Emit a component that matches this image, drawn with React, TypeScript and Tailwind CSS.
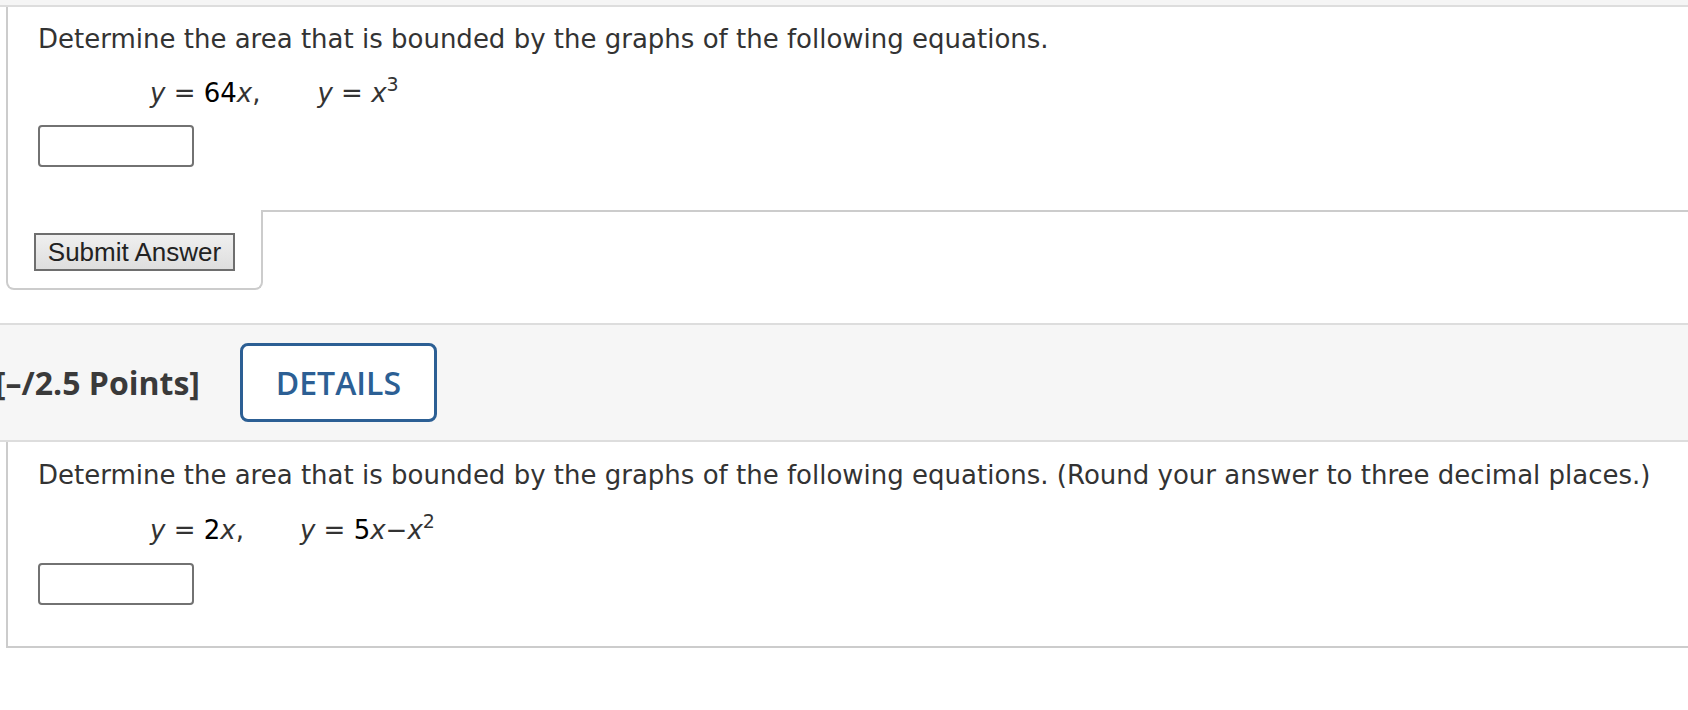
import React from 'react';

const questionFont = "font-['DejaVu_Sans',Verdana,sans-serif]";

const Sup: React.FC<{ children: React.ReactNode }> = ({ children }) => (
  <sup className="relative -top-[1px] align-super text-[19px] leading-none">{children}</sup>
);

const V: React.FC<{ children: React.ReactNode }> = ({ children }) => <i className="italic">{children}</i>;

const AnswerBox: React.FC<{ className?: string }> = ({ className }) => (
  <input
    type="text"
    className={`block h-[42px] w-[156px] rounded-[4px] border-2 border-[#727272] bg-white outline-none ${className ?? ''}`}
  />
);

export default function App() {
  return (
    <div className={`min-h-screen bg-white text-[#333] ${questionFont}`}>
      <div className="h-[5px] bg-[#f5f5f5]" />

      {/* first question, with the submit tab */}
      <div className="border-t-2 border-[#dddddd]">
        <div className="ml-[6px] border-l-2 border-[#cccccc] pl-[30px] pt-[13px] pb-[43px]">
          <p className="text-[26px] leading-[39px]">
            Determine the area that is bounded by the graphs of the following equations.
          </p>
          <div className="mt-[15px] flex pl-[112px] text-[26px] leading-[39px] whitespace-pre">
            <span>
              <V>y</V> = <span className="text-black">64</span>
              <V>x</V>,
            </span>
            <span className="ml-[57px]">
              <V>y</V> = <V>x</V>
              <Sup>3</Sup>
            </span>
          </div>
          <AnswerBox className="mt-[12px]" />
        </div>
        <div className="flex">
          <div className="ml-[6px] h-[80px] w-[257px] rounded-b-[8px] border-2 border-t-0 border-[#cccccc] pl-[26px] pt-[23px]">
            <button
              type="button"
              className="flex h-[38px] w-[201px] items-center justify-center border-2 border-[#6e6e6e] bg-linear-to-b from-[#efefef] to-[#dedede] font-['Liberation_Sans',Arial,sans-serif] text-[26px] leading-none text-[#222]"
            >
              Submit Answer
            </button>
          </div>
          <div className="flex-1 border-t-2 border-[#cccccc]" />
        </div>
      </div>

      {/* points header */}
      <div className="mt-[33px] flex h-[119px] items-center border-y-2 border-[#dddddd] bg-[#f6f6f6] font-['Open_Sans',sans-serif]">
        <span className="-ml-[5px] text-[32px] font-bold text-[#3a3a3a]">[–/2.5 Points]</span>
        <button
          type="button"
          className="ml-[40px] flex h-[79px] w-[197px] items-center justify-center rounded-[8px] border-[3px] border-[#2c5f94] bg-white text-[32px] font-semibold text-[#2c5f94]"
        >
          DETAILS
        </button>
      </div>

      {/* second question */}
      <div className="ml-[6px] border-b-2 border-l-2 border-[#cccccc] pl-[30px] pt-[14px] pb-[41px]">
        <p className="text-[26px] leading-[39px]">
          Determine the area that is bounded by the graphs of the following equations. (Round your answer to three decimal places.)
        </p>
        <div className="mt-[16px] flex pl-[112px] text-[26px] leading-[39px] whitespace-pre">
          <span>
            <V>y</V> = <span className="text-black">2</span>
            <V>x</V>,
          </span>
          <span className="ml-[56px]">
            <V>y</V> = <span className="text-black">5</span>
            <V>x</V>−<V>x</V>
            <Sup>2</Sup>
          </span>
        </div>
        <AnswerBox className="mt-[13px]" />
      </div>
    </div>
  );
}
